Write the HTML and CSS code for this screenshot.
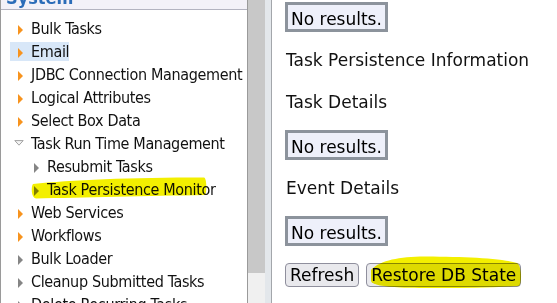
FILE: index.html
```html
<!DOCTYPE html>
<html lang="en">
<head>
    <meta charset="UTF-8">
    <meta name="viewport" content="width=device-width, initial-scale=1.0">
    <title>Task Persistence Monitor</title>
    <link rel="stylesheet" href="styles.css">
</head>
<body>
    <div class="layout">
        <div class="sidebar">
            <div class="panel">
                <div class="panel-title">System</div>
                <ul class="tree">
                    <li><a class="node"><span class="arrow"></span>Bulk Tasks</a></li>
                    <li><a class="node selected"><span class="arrow"></span>Email</a></li>
                    <li><a class="node"><span class="arrow"></span>JDBC Connection Management</a></li>
                    <li><a class="node"><span class="arrow"></span>Logical Attributes</a></li>
                    <li><a class="node"><span class="arrow"></span>Select Box Data</a></li>
                    <li>
                        <a class="node"><svg class="open-arrow" width="10" height="6" viewBox="0 0 10 6"><path d="M0.8 0.6 L9.2 0.6 L5 5.2 Z" fill="#f4f4f4" stroke="#a2a2a2" stroke-width="1"/></svg>Task Run Time Management</a>
                        <ul class="subtree">
                            <li><a class="node"><span class="arrow grey"></span>Resubmit Tasks</a></li>
                            <li><a class="node"><span class="arrow grey"></span>Task Persistence Monitor</a></li>
                        </ul>
                    </li>
                    <li><a class="node"><span class="arrow"></span>Web Services</a></li>
                    <li><a class="node"><span class="arrow"></span>Workflows</a></li>
                    <li><a class="node"><span class="arrow grey"></span>Bulk Loader</a></li>
                    <li><a class="node"><span class="arrow grey"></span>Cleanup Submitted Tasks</a></li>
                    <li><a class="node"><span class="arrow grey"></span>Delete Recurring Tasks</a></li>
                </ul>
            </div>
            <div class="scrollbar"><div class="thumb"></div></div>
            <div class="frame-edge"></div>
        </div>

        <div class="content">
            <div class="results">No results.</div>
            <p class="heading first">Task Persistence Information</p>
            <p class="heading">Task Details</p>
            <div class="results">No results.</div>
            <p class="heading">Event Details</p>
            <div class="results">No results.</div>
            <div class="actions">
                <button class="btn">Refresh</button>
                <button class="btn">Restore DB State</button>
            </div>
        </div>
    </div>

    <!-- highlighter marks drawn over the screenshot -->
    <svg class="marks" width="557" height="303" viewBox="0 0 557 303">
        <path d="M33,184 C70,180 130,177.5 204,177.5 C207,178 207,194 205,195 C150,196 80,197.5 36,198.5 C31,198 31,186 33,184 Z"/>
        <path d="M371,270 C378,262 395,257 420,256.5 C460,256.5 500,258 517,263 C522,266 522,283 519,286 C480,288.5 430,288.5 400,287.5 C384,286.5 372,285 371,281 Z"/>
    </svg>
</body>
</html>
```

FILE: styles.css
```css
* {
    box-sizing: border-box;
}

body {
    margin: 0;
    height: 303px;
    overflow: hidden;
    background-color: #fff;
    color: #111;
    position: relative;
}

.layout {
    display: flex;
    height: 303px;
}

/* left navigation */
.sidebar {
    display: flex;
    flex-shrink: 0;
}
.panel {
    width: 248px;
    overflow: hidden;
    border-left: 1px solid #9a9a9a;
    border-right: 1px solid #9a9a9a;
    font-family: "DejaVu Sans Condensed", "DejaVu Sans", sans-serif;
    font-size: 16px;
    letter-spacing: -0.35px;
}
.panel-title {
    height: 23px;
    margin-top: -13px;
    padding-left: 5px;
    line-height: 22px;
    font-size: 18px;
    font-weight: bold;
    letter-spacing: 0;
    color: #2b6cb8;
    background-color: #f3f1f8;
    border-bottom: 1px solid #b3b3c0;
}
.tree,
.subtree {
    list-style: none;
    margin: 0;
    padding: 0;
}
.tree {
    padding-top: 7px;
}
.tree li {
    line-height: 23px;
    white-space: nowrap;
}
.subtree {
    padding-left: 16px;
}
.node {
    margin-left: 9px;
    padding-left: 8px;
    color: #111;
}
.node.selected {
    background-color: #d8e7f8;
}
.arrow {
    display: inline-block;
    width: 0;
    height: 0;
    margin-right: 8px;
    vertical-align: -1px;
    border-left: 5px solid #f7931e;
    border-top: 5px solid transparent;
    border-bottom: 5px solid transparent;
}
.arrow.grey {
    border-left-color: #858585;
}
.open-arrow {
    margin-left: -4px;
    margin-right: 7px;
    vertical-align: 3px;
}

.scrollbar {
    width: 17px;
    background-color: #f0f0f0;
}
.thumb {
    height: 273px;
    background-color: #c8c8c8;
}
.frame-edge {
    width: 7px;
    background-color: #e3e7eb;
    border-right: 1px solid #a3a6ab;
}

/* main area */
.content {
    padding: 2px 0 0 13px;
    font-family: "DejaVu Sans", Verdana, sans-serif;
    font-size: 17px;
}
.results {
    display: inline-block;
    height: 30px;
    padding: 5px 3px 0 3px;
    line-height: 19px;
    color: #000;
    background-color: #eef0fa;
    border: 3px solid #8c939c;
}
.heading {
    margin: 19px 0 18px 1px;
    line-height: 19px;
    color: #111;
}
.heading.first {
    margin-bottom: 23px;
}
.actions {
    display: flex;
    gap: 7px;
    margin-top: 17px;
}
.btn {
    height: 24px;
    padding: 0 4px;
    font-family: "DejaVu Sans", Verdana, sans-serif;
    font-size: 17px;
    line-height: 20px;
    color: #000;
    background-color: #e9e9ed;
    border: 1px solid #8f8f9d;
    border-radius: 4px;
}

.marks {
    position: absolute;
    left: 0;
    top: 0;
    pointer-events: none;
}
.marks path {
    fill: #f3ef00;
    mix-blend-mode: multiply;
}
```
